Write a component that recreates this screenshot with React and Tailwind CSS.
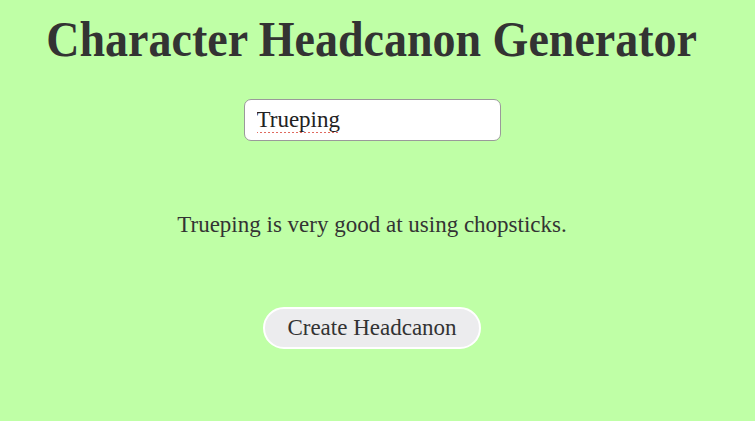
import React, { useState } from 'react';

export default function App() {
  const [name, setName] = useState('Trueping');

  return (
    <div className="min-h-screen w-full bg-[#bfffa6] text-[#333333] flex flex-col items-center pr-[11px] font-['Liberation_Serif','Times_New_Roman',serif]">
      <h1 className="mt-[10px] text-[50px] font-bold leading-[58px] scale-x-[0.92] whitespace-nowrap">
        Character Headcanon Generator
      </h1>
      <input
        value={name}
        onChange={(e) => setName(e.target.value)}
        spellCheck
        className="mt-[31px] w-[257px] h-[42px] rounded-[7px] border border-[#9a9a9a] bg-white px-[12px] font-['Liberation_Serif','Times_New_Roman',serif] text-[23px] text-[#222222] outline-none underline decoration-dotted decoration-[#e06a5f] decoration-2 underline-offset-[5px]"
      />
      <p className="mt-[69px] text-[23px] leading-[30px]">
        {name} is very good at using chopsticks.
      </p>
      <button className="mt-[67px] w-[218px] h-[42px] rounded-full border-2 border-white bg-[#ececee] font-['Liberation_Serif','Times_New_Roman',serif] text-[23px] text-[#333333]">
        Create Headcanon
      </button>
    </div>
  );
}
